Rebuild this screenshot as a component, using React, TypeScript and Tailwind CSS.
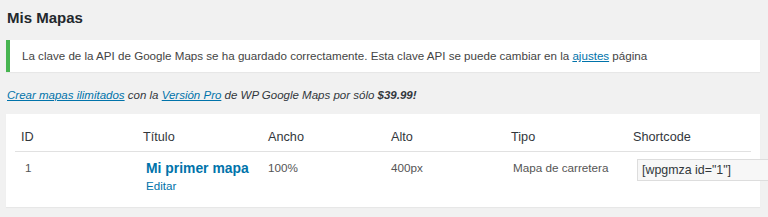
import React from "react";

const columns = ["ID", "Título", "Ancho", "Alto", "Tipo", "Shortcode"];

export default function App() {
  return (
    <div
      className="w-[768px] h-[217px] overflow-hidden bg-[#f1f1f1] text-[#444]"
      style={{ fontFamily: '"Liberation Sans", Arial, sans-serif' }}
    >
      <div className="pl-[6px] pr-[8px]">
        {/* Page heading */}
        <h1 className="pt-[7px] pl-[1px] text-[15px] leading-[22px] font-bold text-[#23282d]">
          Mis Mapas
        </h1>

        {/* Success notice */}
        <div className="mt-[11px] h-[32px] flex items-center bg-white border-l-4 border-[#46b450] shadow-[0_1px_1px_rgba(0,0,0,0.04)] pl-[12px] text-[11.6px]">
          <span>
            La clave de la API de Google Maps se ha guardado correctamente. Esta clave API se puede cambiar en la{" "}
            <a href="#" className="text-[#0073aa] underline">ajustes</a> página
          </span>
        </div>

        {/* Pro upsell */}
        <p className="mt-[15px] pl-[1px] text-[11.5px] leading-[16px] italic text-[#32373c]">
          <a href="#" className="text-[#0073aa] underline">Crear mapas ilimitados</a> con la{" "}
          <a href="#" className="text-[#0073aa] underline">Versión Pro</a> de WP Google Maps por sólo{" "}
          <strong>$39.99!</strong>
        </p>

        {/* Maps table */}
        <div className="mt-[11px] h-[93px] bg-white pt-[12px] px-[9px] shadow-[0_1px_1px_rgba(0,0,0,0.04)]">
          <div className="grid grid-cols-[122px_125px_123px_120px_122px_123px] h-[26px] border-b border-[#e1e1e1] text-[12.7px] text-[#32373c] items-center">
            {columns.map((c) => (
              <div key={c} className="pl-[6px] pb-[1px]">{c}</div>
            ))}
          </div>
          <div className="grid grid-cols-[122px_125px_123px_120px_122px_123px] pt-[6px] text-[11.7px] text-[#555]">
            <div className="pl-[10px] leading-[20px]">1</div>
            <div className="pl-[9px]">
              <a href="#" className="block text-[13.9px] leading-[20px] font-bold text-[#0073aa]">
                Mi primer mapa
              </a>
              <a href="#" className="block text-[11.6px] leading-[16px] text-[#0073aa]">
                Editar
              </a>
            </div>
            <div className="pl-[6px] leading-[20px]">100%</div>
            <div className="pl-[6px] leading-[20px]">400px</div>
            <div className="pl-[8px] leading-[20px]">Mapa de carretera</div>
            <div className="pl-[10px]">
              <input
                readOnly
                value='[wpgmza id="1"]'
                className="mt-[1px] w-[150px] h-[22px] px-[4px] bg-[#f7f7f7] border border-[#dddddd] text-[12.4px] text-[#32373c] outline-none"
              />
            </div>
          </div>
        </div>
      </div>
    </div>
  );
}
